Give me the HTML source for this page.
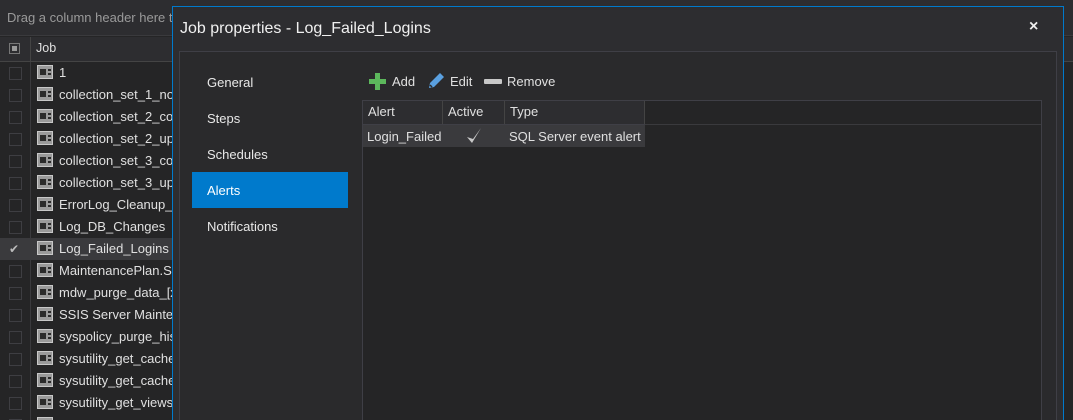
<!DOCTYPE html>
<html style="overflow:hidden;height:420px"><head><style>
body{margin:0;width:1073px;height:420px;background:#252526;font-family:"Liberation Sans",sans-serif;font-size:12.5px;color:#e0e0e0;overflow:hidden;position:relative}
.abs{position:absolute}
.drag{left:0;top:0;width:1073px;height:36px;background:#2d2d30;border-bottom:1px solid #3a3a3d;color:#9a9a9a;line-height:36px;padding-left:7px;box-sizing:border-box;font-size:13px}
.hdr{left:0;top:37px;width:1073px;height:24px;background:#2d2d30;border-bottom:1px solid #444}
.row{position:absolute;left:0;width:172px;height:22px;line-height:22px;overflow:hidden}
.cb{position:absolute;left:9px;top:5px;width:11px;height:11px;border:1px solid #3e3e42}
.ic{position:absolute;left:37px;top:3px;width:16px;height:14px;background:#9a9a9a;box-sizing:border-box;border:1px solid #c8c8c8}
.ic:before{content:"";position:absolute;left:2px;top:3px;width:6px;height:6px;background:#2b2b2b}
.ic:after{content:"";position:absolute;left:10px;top:3px;width:3px;height:2px;background:#2b2b2b;box-shadow:0 4px 0 #2b2b2b}
.tx{position:absolute;left:59px;white-space:nowrap;font-size:13px}
.dlg{left:172px;top:6px;width:892px;height:414px;background:#2d2d30;border:1px solid #007acc;border-bottom:none;box-sizing:border-box}
.panel{left:179px;top:51px;width:878px;height:369px;background:#2a2a2c;border:1px solid #3f3f46;border-bottom:none;box-sizing:border-box}
.nav{position:absolute;left:207px;color:#e8e8e8;font-size:13px}
</style></head><body>
<div class="abs drag">Drag a column header here to group by that column</div>
<div class="abs hdr">
 <div class="abs" style="left:9px;top:6px;width:11px;height:11px;border:1px solid #777;box-sizing:border-box"><div style="margin:2px;width:5px;height:5px;background:#999"></div></div>
 <div class="abs" style="left:30px;top:0;width:1px;height:24px;background:#444"></div>
 <div class="abs" style="left:36px;top:4px">Job</div>
</div>
<div class="abs" style="left:30px;top:62px;width:1px;height:358px;background:#3a3a3d"></div>
<div class="row" style="top:62px"><div class="cb"></div><div class="ic"></div><span class="tx">1</span></div>
<div class="row" style="top:84px"><div class="cb"></div><div class="ic"></div><span class="tx">collection_set_1_noncached</span></div>
<div class="row" style="top:106px"><div class="cb"></div><div class="ic"></div><span class="tx">collection_set_2_collection</span></div>
<div class="row" style="top:128px"><div class="cb"></div><div class="ic"></div><span class="tx">collection_set_2_upload</span></div>
<div class="row" style="top:150px"><div class="cb"></div><div class="ic"></div><span class="tx">collection_set_3_collection</span></div>
<div class="row" style="top:172px"><div class="cb"></div><div class="ic"></div><span class="tx">collection_set_3_upload</span></div>
<div class="row" style="top:194px"><div class="cb"></div><div class="ic"></div><span class="tx">ErrorLog_Cleanup_DB</span></div>
<div class="row" style="top:216px"><div class="cb"></div><div class="ic"></div><span class="tx">Log_DB_Changes</span></div>
<div class="row" style="top:238px;background:#3a3a3d"><span style="position:absolute;left:9px;color:#bbb;font-size:12px">✔</span><div class="ic"></div><span class="tx">Log_Failed_Logins</span></div>
<div class="row" style="top:260px"><div class="cb"></div><div class="ic"></div><span class="tx">MaintenancePlan.Subplan</span></div>
<div class="row" style="top:282px"><div class="cb"></div><div class="ic"></div><span class="tx">mdw_purge_data_[x]</span></div>
<div class="row" style="top:304px"><div class="cb"></div><div class="ic"></div><span class="tx">SSIS Server Maintenance</span></div>
<div class="row" style="top:326px"><div class="cb"></div><div class="ic"></div><span class="tx">syspolicy_purge_history</span></div>
<div class="row" style="top:348px"><div class="cb"></div><div class="ic"></div><span class="tx">sysutility_get_cache_tables</span></div>
<div class="row" style="top:370px"><div class="cb"></div><div class="ic"></div><span class="tx">sysutility_get_cache_tables</span></div>
<div class="row" style="top:392px"><div class="cb"></div><div class="ic"></div><span class="tx">sysutility_get_views_data</span></div>
<div class="row" style="top:414px;height:6px"><div class="cb"></div><div class="ic"></div></div>

<div class="abs dlg"></div>
<div class="abs" style="left:180px;top:20px;font-size:16px;color:#f0f0f0">Job properties - Log_Failed_Logins</div>
<div class="abs" style="left:1029px;top:18px;font-size:16px;color:#eee;font-weight:bold">×</div>
<div class="abs panel"></div>
<div class="nav" style="top:75px">General</div>
<div class="nav" style="top:111px">Steps</div>
<div class="nav" style="top:147px">Schedules</div>
<div class="abs" style="left:192px;top:172px;width:156px;height:36px;background:#007acc"></div>
<div class="nav" style="top:183px;color:#fff">Alerts</div>
<div class="nav" style="top:219px">Notifications</div>

<svg class="abs" style="left:368px;top:72px" width="20" height="20"><path d="M7 1h5v6h6v5h-6v6h-5v-6h-6v-5h6z" fill="#5cb85c"/></svg>
<div class="abs" style="left:392px;top:74px;font-size:13px">Add</div>
<svg class="abs" style="left:426px;top:71px" width="20" height="20"><path d="M14 2l4 4-10 10-5 1 1-5z" fill="#5aa0e0"/><path d="M4 14l2 2" stroke="#2a2a2c" stroke-width="1.5"/></svg>
<div class="abs" style="left:450px;top:74px;font-size:13px">Edit</div>
<div class="abs" style="left:484px;top:79px;width:18px;height:5px;background:#c8c8c8;border-radius:1px"></div>
<div class="abs" style="left:507px;top:74px;font-size:13px">Remove</div>

<div class="abs" style="left:362px;top:100px;width:680px;height:320px;background:#252526;border:1px solid #3f3f46;border-bottom:none;box-sizing:border-box"></div>
<div class="abs" style="left:363px;top:101px;width:282px;height:23px;background:#2d2d30;border-bottom:1px solid #3f3f46"></div>
<div class="abs" style="left:442px;top:101px;width:1px;height:23px;background:#444"></div>
<div class="abs" style="left:504px;top:101px;width:1px;height:23px;background:#444"></div>
<div class="abs" style="left:644px;top:101px;width:1px;height:23px;background:#444"></div>
<div class="abs" style="left:645px;top:124px;width:396px;height:1px;background:#3a3a3d"></div>
<div class="abs" style="left:368px;top:104px;font-size:13px">Alert</div>
<div class="abs" style="left:448px;top:104px;font-size:13px">Active</div>
<div class="abs" style="left:510px;top:104px;font-size:13px">Type</div>
<div class="abs" style="left:363px;top:125px;width:282px;height:22px;background:#3a3a3d"></div>
<div class="abs" style="left:367px;top:129px;font-size:13px">Login_Failed</div>
<svg class="abs" style="left:465px;top:127px" width="18" height="18"><path d="M2 10l5 6 9-15-8 11z" fill="#c8c8c8"/></svg>
<div class="abs" style="left:509px;top:129px;font-size:13px">SQL Server event alert</div>
</body></html>
